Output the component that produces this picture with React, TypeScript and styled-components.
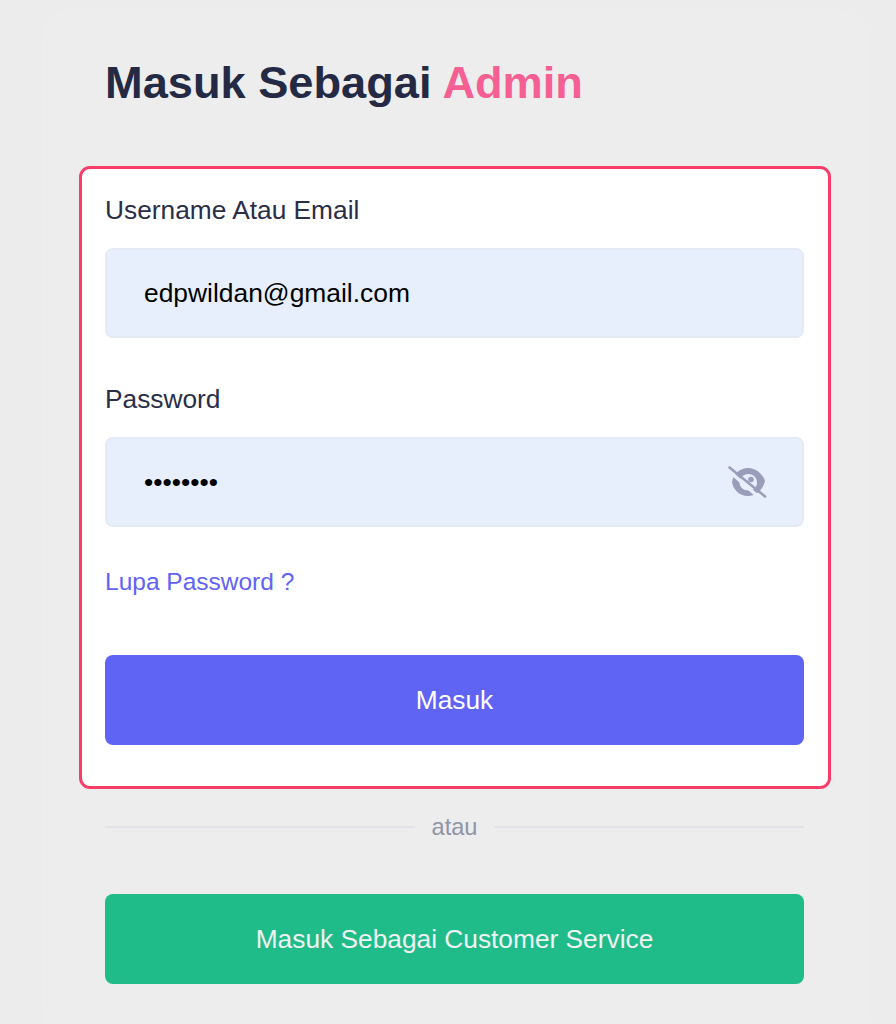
import { createGlobalStyle } from 'styled-components'
import styled from 'styled-components'

const GlobalStyle = createGlobalStyle`
  html, body {
    margin: 0;
    padding: 0;
    background: #ececec;
  }
  body {
    font-family: "Liberation Sans", Arial, sans-serif;
  }
`

const Page = styled.div`
  height: 1024px;
  overflow: hidden;
  box-sizing: border-box;
  padding: 9px 28px 0 42px;
`

const Card = styled.div`
  height: 1030px;
  box-sizing: border-box;
  padding: 0 36px;
  border: 1px solid #eeeeee;
  border-radius: 32px;
  background: #ededed;
  display: flex;
  flex-direction: column;
`

const Title = styled.h1`
  margin: 43px 0 0 26px;
  font-size: 45.2px;
  line-height: 60px;
  font-weight: 700;
  color: #252a44;
`

const Accent = styled.span`
  color: #f55f93;
`

const FormBox = styled.form`
  margin-top: 53px;
  width: 752px;
  height: 623px;
  box-sizing: border-box;
  padding: 26px 24px 0 23px;
  background: #fff;
  border: 3px solid #fb3b68;
  border-radius: 11px;
  display: flex;
  flex-direction: column;
`

const Label = styled.label`
  font-size: 26.3px;
  line-height: 30px;
  color: #2a2e48;
`

const Field = styled.div`
  margin: 23px 0 46px;
  height: 90px;
  box-sizing: border-box;
  padding: 0 35px 0 37px;
  background: #e8effc;
  border: 2px solid #e4e9f4;
  border-radius: 8px;
  display: flex;
  align-items: center;
  justify-content: space-between;
  font-size: 26.4px;
  color: #000;
`

const ForgotLink = styled.a`
  margin-top: -6px;
  font-size: 24.5px;
  line-height: 30px;
  color: #5f64f4;
`

const Button = styled.button<{ $bg: string; $fg: string }>`
  display: block;
  width: 100%;
  height: 90px;
  border: 0;
  border-radius: 8px;
  background: ${(p) => p.$bg};
  color: ${(p) => p.$fg};
  font-family: inherit;
  font-size: 26.3px;
  padding: 0;
`

const SubmitRow = styled.div`
  margin-top: 58px;
`

const Divider = styled.div`
  margin: 24px 27px 0 26px;
  display: flex;
  align-items: center;
  gap: 17px;
  font-size: 23.6px;
  line-height: 28px;
  color: #8f94a6;
  &::before,
  &::after {
    content: '';
    flex: 1;
    height: 2px;
    background: #e0e2e8;
  }
`

const AltRow = styled.div`
  margin: 53px 27px 0 26px;
`

function EyeOff() {
  return (
    <svg width="40" height="36" viewBox="0 0 40 36" fill="none">
      <path
        fillRule="evenodd"
        fill="#9a9db9"
        d="M21 4C30 4 36 11 38 17C36 25 30 32 21 32C12 32 6 25 5 18C6 11 12 4 21 4ZM21.5 10C16.5 10 12.5 14 12.5 18.5C12.5 23 16.5 26.5 21.5 26.5C26.5 26.5 30 23 30 18.5C30 14 26.5 10 21.5 10Z"
      />
      <circle cx="24" cy="15.5" r="2.8" fill="#9a9db9" />
      <path d="M1 6L35 36" stroke="#e8effc" strokeWidth="3.5" />
      <path d="M2.5 3.5L38 32.5" stroke="#9a9db9" strokeWidth="2.6" strokeLinecap="round" />
    </svg>
  )
}

export default function App() {
  return (
    <>
      <GlobalStyle />
      <Page>
        <Card>
          <Title>
            Masuk Sebagai <Accent>Admin</Accent>
          </Title>
          <FormBox>
            <Label>Username Atau Email</Label>
            <Field>edpwildan@gmail.com</Field>
            <Label>Password</Label>
            <Field>
              <span>••••••••</span>
              <EyeOff />
            </Field>
            <ForgotLink>Lupa Password ?</ForgotLink>
            <SubmitRow>
              <Button type="button" $bg="#5f64f4" $fg="#ffffff">
                Masuk
              </Button>
            </SubmitRow>
          </FormBox>
          <Divider>atau</Divider>
          <AltRow>
            <Button type="button" $bg="#1fbc8a" $fg="#eff3f1">
              Masuk Sebagai Customer Service
            </Button>
          </AltRow>
        </Card>
      </Page>
    </>
  )
}
